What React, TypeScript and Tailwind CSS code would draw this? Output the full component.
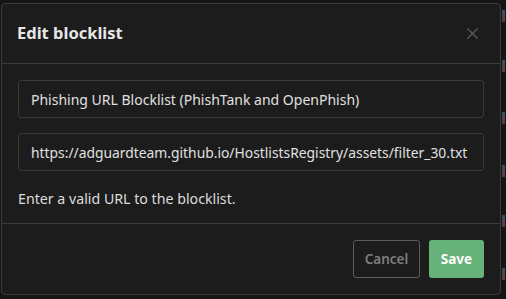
import { X } from "lucide-react";

const font = { fontFamily: '"Segoe UI", "Noto Sans", "Open Sans", sans-serif' };

const EDGE_MARKS = [10, 60, 112, 165, 215, 268];

export default function App() {
  return (
    <div className="relative w-[506px] h-[299px] bg-[#151515] overflow-hidden" style={font}>
      {/* bits of the page behind the modal */}
      {EDGE_MARKS.map((y) => (
        <div
          key={y}
          className="absolute left-[502px] w-[3px] h-[12px] bg-gradient-to-b from-[#3f6f80] to-[#7a4a55] opacity-70"
          style={{ top: y }}
        />
      ))}

      <div className="absolute left-[1px] top-[3px] w-[500px] h-[292px] flex flex-col rounded-[4px] border border-[#3b3b3b] bg-[#1c1c1c]">
        <div className="h-[60px] flex items-center justify-between pl-[15px] pr-[18px] border-b border-[#3b3b3b]">
          <h2 className="text-[16.5px] font-bold text-[#e6e6e6]">Edit blocklist</h2>
          <X size={19} strokeWidth={1.6} className="text-[#5a5a5a]" />
        </div>

        <div className="flex-1 flex flex-col px-[16px] pt-[16px] border-b border-[#3b3b3b]">
          <input
            readOnly
            value="Phishing URL Blocklist (PhishTank and OpenPhish)"
            className="h-[38px] w-full rounded-[3px] border border-[#383838] bg-[#1c1c1c] px-[12px] text-[14px] text-[#e0e0e0] outline-none"
            style={font}
          />
          <input
            readOnly
            value="https://adguardteam.github.io/HostlistsRegistry/assets/filter_30.txt"
            className="mt-[15px] h-[38px] w-full rounded-[3px] border border-[#383838] bg-[#1c1c1c] pl-[12px] pr-[4px] text-[13.85px] text-[#e0e0e0] outline-none"
            style={font}
          />
          <p className="mt-[17px] text-[14.2px] text-[#dcdcdc]">Enter a valid URL to the blocklist.</p>
        </div>

        <div className="h-[70px] flex items-center justify-end gap-[9px] pr-[16px]">
          <button className="h-[38px] w-[67px] rounded-[3px] border border-[#5c5c5c] text-[13.5px] font-semibold text-[#7d7d7d]">
            Cancel
          </button>
          <button className="h-[38px] w-[55px] rounded-[3px] bg-[#67b279] text-[13.5px] font-bold text-white">
            Save
          </button>
        </div>
      </div>
    </div>
  );
}
